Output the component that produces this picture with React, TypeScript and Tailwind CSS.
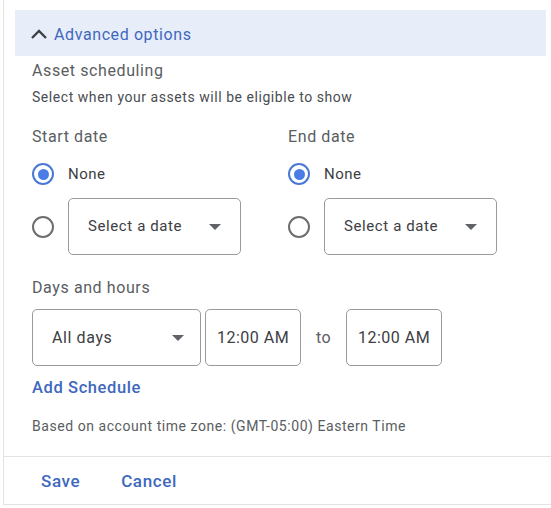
import React from "react";

const Radio = ({ checked }: { checked?: boolean }) =>
  checked ? (
    <span className="flex h-[22px] w-[22px] items-center justify-center rounded-full border-2 border-[#4a78d6]">
      <span className="h-[11px] w-[11px] rounded-full bg-[#4a7de6]" />
    </span>
  ) : (
    <span className="h-[22px] w-[22px] rounded-full border-2 border-[#6e6e6e]" />
  );

const Caret = () => (
  <svg width="12" height="6" viewBox="0 0 12 6">
    <path d="M0 0 L12 0 L6 6 Z" fill="#5f6368" />
  </svg>
);

const DateSelect = () => (
  <div className="flex h-[57px] w-[173px] items-center justify-between rounded-[5px] border border-[#9a9a9a] pl-[19px] pr-[19px]">
    <span className="text-[15px] tracking-[0.6px] text-[#3c4043]">Select a date</span>
    <Caret />
  </div>
);

const DateCol = ({ label }: { label: string }) => (
  <div className="flex flex-col">
    <div className="h-[24px] text-[16px] leading-[24px] tracking-[0.6px] text-[#5a5d61]">{label}</div>
    <div className="mt-[13px] flex h-[24px] items-center">
      <div className="flex w-[22px] justify-center">
        <Radio checked />
      </div>
      <span className="ml-[14px] text-[15px] tracking-[0.5px] text-[#3c4043]">None</span>
    </div>
    <div className="mt-[12px] flex items-center">
      <div className="flex w-[22px] justify-center">
        <Radio />
      </div>
      <div className="ml-[14px]">
        <DateSelect />
      </div>
    </div>
  </div>
);

export default function App() {
  return (
    <div
      className="h-[508px] w-[551px] bg-white"
      style={{ fontFamily: "Roboto, 'Noto Sans', sans-serif" }}
    >
      <div className="ml-[3px] flex h-[505px] w-[548px] flex-col border-b border-l border-[#e3e3e3]">
        <div className="ml-[11px] mt-[10px] flex h-[47px] w-[531px] items-center bg-[#e8edfa] pl-[15px] pt-[3px]">
          <svg width="18" height="12" viewBox="0 0 18 12" className="mt-[-1px]">
            <path d="M2 10 L9 3 L16 10" stroke="#3c4043" strokeWidth="2.3" fill="none" />
          </svg>
          <span className="ml-[6px] text-[16px] tracking-[0.6px] text-[#3e68bd]">Advanced options</span>
        </div>
        <div className="flex flex-col pl-[28px]">
          <div className="mt-[3px] h-[24px] text-[16px] leading-[24px] tracking-[0.6px] text-[#5a5d61]">Asset scheduling</div>
          <div className="mt-[4px] h-[20px] text-[14px] leading-[20px] tracking-[0.55px] text-[#4a4d52]">
            Select when your assets will be eligible to show
          </div>
          <div className="mt-[18px] grid grid-cols-[256px_256px]">
            <DateCol label="Start date" />
            <DateCol label="End date" />
          </div>
          <div className="mt-[21px] h-[24px] text-[16px] leading-[24px] tracking-[0.6px] text-[#5a5d61]">Days and hours</div>
          <div className="mt-[9px] flex items-center">
            <div className="flex h-[57px] w-[169px] items-center justify-between rounded-[5px] border border-[#9a9a9a] pl-[19px] pr-[16px]">
              <span className="text-[16px] tracking-[0.6px] text-[#3c4043]">All days</span>
              <Caret />
            </div>
            <div className="ml-[4px] flex h-[57px] w-[96px] items-center justify-center rounded-[5px] border border-[#9a9a9a]">
              <span className="text-[16px] tracking-[0.5px] text-[#3c4043]">12:00 AM</span>
            </div>
            <div className="flex w-[45px] justify-center text-[16px] tracking-[0.5px] text-[#5a5d61]">to</div>
            <div className="flex h-[57px] w-[96px] items-center justify-center rounded-[5px] border border-[#9a9a9a]">
              <span className="text-[16px] tracking-[0.5px] text-[#3c4043]">12:00 AM</span>
            </div>
          </div>
          <div className="mt-[12px] h-[20px] text-[16.5px] font-medium leading-[20px] tracking-[0.6px] text-[#3e68bd]">Add Schedule</div>
          <div className="mt-[18px] h-[20px] text-[14px] leading-[20px] tracking-[0.55px] text-[#5a5d61]">
            Based on account time zone: (GMT-05:00) Eastern Time
          </div>
        </div>
        <div className="mt-[20px] h-px w-full bg-[#e3e3e3]" />
        <div className="flex h-[48px] items-center pl-[37px] pt-[2px] text-[17px] font-medium tracking-[0.6px] text-[#3e68bd]">
          <span>Save</span>
          <span className="ml-[41px]">Cancel</span>
        </div>
      </div>
    </div>
  );
}
